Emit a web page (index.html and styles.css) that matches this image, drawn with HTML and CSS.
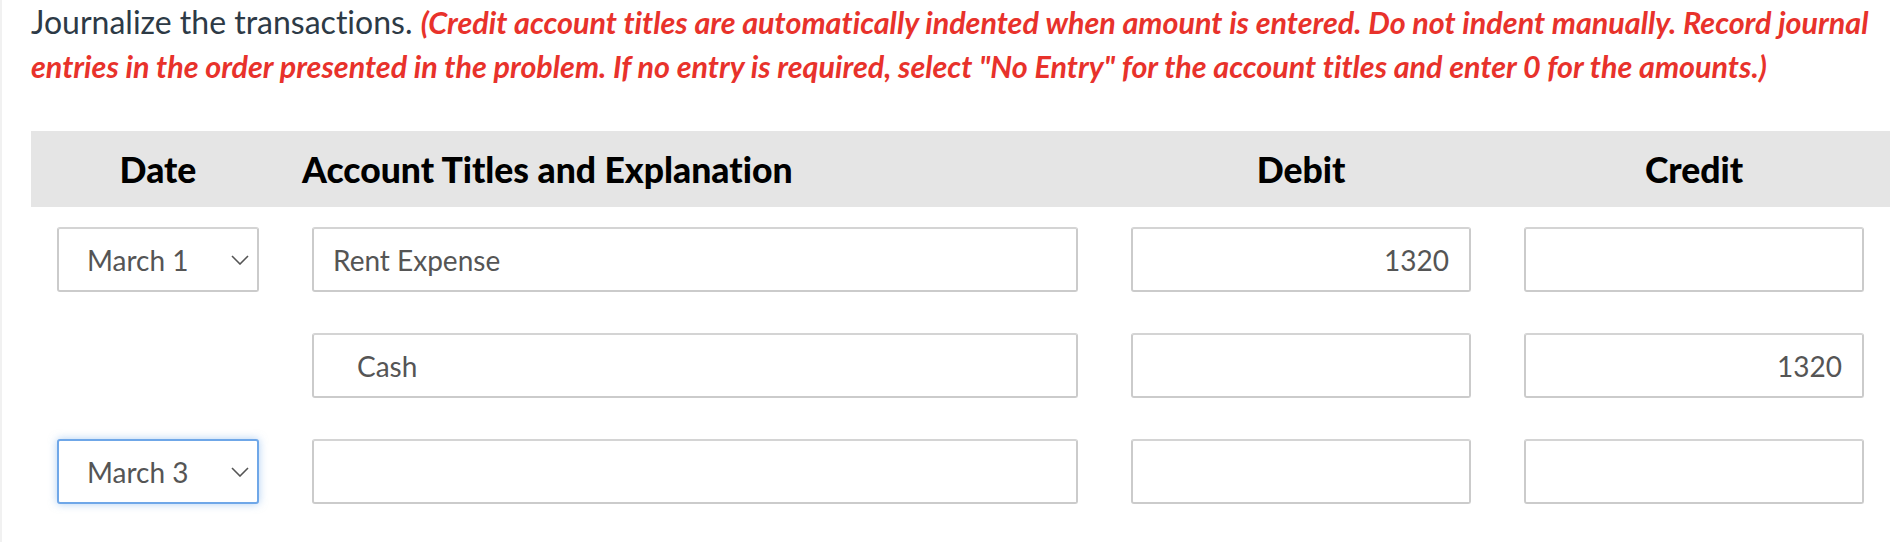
FILE: index.html
```html
<!DOCTYPE html>
<html lang="en">
<head>
<meta charset="utf-8">
<title>Journalize the transactions</title>
<link rel="stylesheet" href="styles.css">
</head>
<body>
<div class="page">
  <p class="instructions">Journalize the transactions. <em class="note">(Credit account titles are automatically indented when amount is entered. Do not indent manually. Record journal entries in the order presented in the problem. If no entry is required, select "No Entry" for the account titles and enter 0 for the amounts.)</em></p>

  <div class="journal">
    <div class="grid head">
      <div class="h-date">Date</div>
      <div class="h-account">Account Titles and Explanation</div>
      <div class="h-num">Debit</div>
      <div class="h-num">Credit</div>
    </div>

    <div class="grid row">
      <div class="field select"><span>March 1</span><svg class="chev" viewBox="0 0 18 10" width="18" height="10"><path d="M1 1 L9 9 L17 1" fill="none" stroke="#555" stroke-width="1.6"/></svg></div>
      <div class="field text">Rent Expense</div>
      <div class="field num">1320</div>
      <div class="field num"></div>
    </div>

    <div class="grid row">
      <div class="blank"></div>
      <div class="field text indent">Cash</div>
      <div class="field num"></div>
      <div class="field num">1320</div>
    </div>

    <div class="grid row">
      <div class="field select focus"><span>March 3</span><svg class="chev" viewBox="0 0 18 10" width="18" height="10"><path d="M1 1 L9 9 L17 1" fill="none" stroke="#555" stroke-width="1.6"/></svg></div>
      <div class="field text"></div>
      <div class="field num"></div>
      <div class="field num"></div>
    </div>
  </div>
</div>
</body>
</html>
```

FILE: styles.css
```css
html, body {
  margin: 0;
  padding: 0;
  background: #fff;
}

body {
  font-family: "Lato", "Open Sans", sans-serif;
  font-variant-ligatures: none;
  overflow: hidden;
}

.page {
  border-left: 2px solid #f1f1f1;
  min-height: 542px;
  box-sizing: border-box;
}

.instructions {
  margin: 0;
  padding-left: 29px;
  font-size: 32px;
  line-height: 43px;
  color: #2d3a46;
}

.note {
  font-style: italic;
  font-weight: 700;
  font-size: 30.5px;
  color: #e8322b;
}

.journal {
  margin-top: 43px;
  margin-left: 29px;
}

.grid {
  display: grid;
  grid-template-columns: 202px 766px 340px 340px;
  column-gap: 53px;
  padding-left: 26px;
}

.head {
  background: #e5e5e5;
  height: 76px;
  align-items: center;
  font-weight: 900;
  font-size: 35.5px;
  color: #000;
}

.h-date, .h-num {
  text-align: center;
}

.h-account {
  margin-left: -10px;
}

.row {
  margin-top: 20px;
}

.row + .row {
  margin-top: 41px;
}

.field {
  box-sizing: border-box;
  height: 65px;
  border: 2px solid #cbcbcb;
  border-top-color: #d4d4d4;
  border-radius: 3px;
  background: #fff;
  display: flex;
  align-items: center;
  font-size: 28px;
  color: #555;
}

.select {
  padding: 0 8px 0 28px;
  justify-content: space-between;
}

.chev {
  display: block;
}

.focus {
  border-color: #6fa7e8;
  box-shadow: 0 0 8px rgba(111, 167, 232, 0.55);
}

.text {
  padding-left: 19px;
}

.text.indent {
  padding-left: 43px;
}

.num {
  justify-content: flex-end;
  padding-right: 20px;
}
```
